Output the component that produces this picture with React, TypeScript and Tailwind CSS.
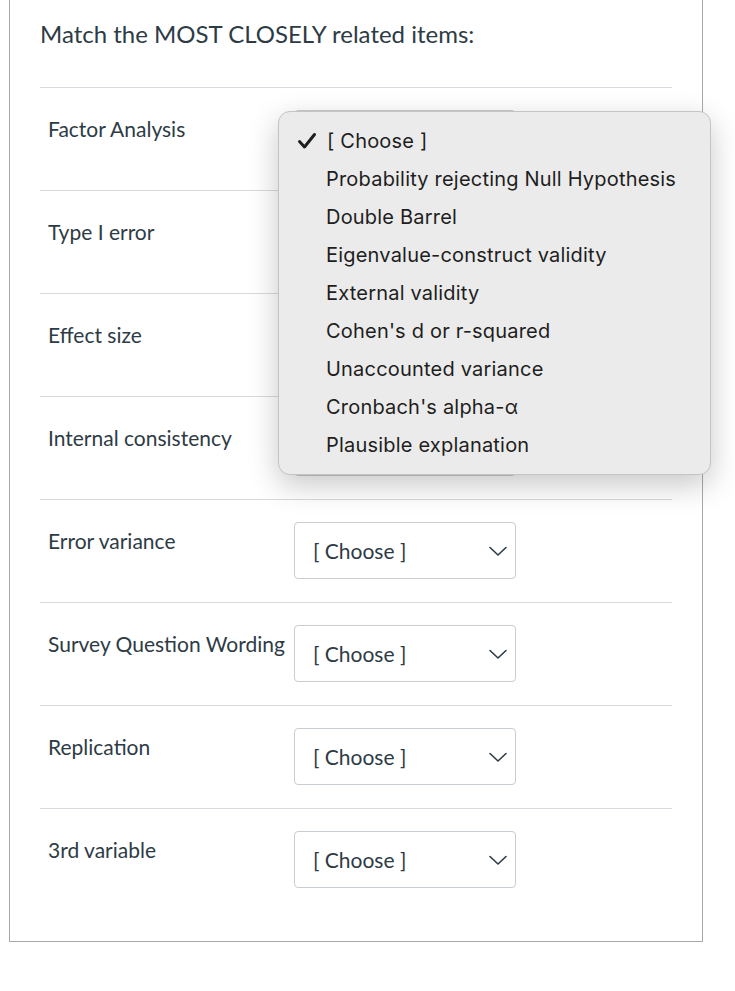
import React from "react";

const rows = [
  "Factor Analysis",
  "Type I error",
  "Effect size",
  "Internal consistency",
  "Error variance",
  "Survey Question Wording",
  "Replication",
  "3rd variable",
];

const options = [
  "Probability rejecting Null Hypothesis",
  "Double Barrel",
  "Eigenvalue-construct validity",
  "External validity",
  "Cohen's d or r-squared",
  "Unaccounted variance",
  "Cronbach's alpha-α",
  "Plausible explanation",
];

const Chevron = () => (
  <svg width="20" height="12" viewBox="0 0 20 12" fill="none" stroke="#2d3b45" strokeWidth="1.6" strokeLinecap="round" strokeLinejoin="round">
    <path d="M2 2.5 L10 10 L18 2.5" />
  </svg>
);

const App: React.FC = () => {
  return (
    <div className="relative min-h-screen bg-white" style={{ fontFamily: "Lato, 'Liberation Sans', sans-serif" }}>
      {/* -------- QUESTION PANEL -------- */}
      <div className="ml-[9px] w-[694px] h-[942px] border-x border-b border-[#a9a9a9] px-[30px] text-[#2d3b45]">
        <h2 className="pt-4 text-[24px] leading-[36px] font-normal">Match the MOST CLOSELY related items:</h2>
        <div className="mt-[35px]">
          {rows.map((label, i) => (
            <div key={label} className="flex h-[103px] border-t border-[#d7dade]">
              <div className="w-[254px] shrink-0 pl-2 pt-[26px] text-[21px] leading-[30px]">{label}</div>
              <div className="pt-[22px]">
                <div className="flex h-[57px] w-[222px] items-center justify-between rounded-[4px] border border-[#c7cdd1] bg-white pl-[18px] pr-[7px]">
                  {/* the first four are hidden under the open menu */}
                  <span className="text-[21px] text-[#2d3b45]">{i < 4 ? "" : "[ Choose ]"}</span>
                  <Chevron />
                </div>
              </div>
            </div>
          ))}
        </div>
      </div>

      {/* -------- OPEN SELECT MENU -------- */}
      <div
        className="absolute left-[278px] top-[111px] w-[433px] rounded-[12px] border border-[#c4c4c4] bg-[#ebebeb] py-[10px] shadow-[0_10px_30px_rgba(0,0,0,0.22)]"
        style={{ fontFamily: "Inter, 'Noto Sans', sans-serif" }}
      >
        <div className="flex h-[38px] items-center text-[20px] tracking-[0.2px] text-[#1e1e1e]">
          <span className="flex w-[48px] justify-end pr-[10px]">
            <svg width="20" height="18" viewBox="0 0 20 18" fill="none" stroke="#1e1e1e" strokeWidth="3" strokeLinecap="round" strokeLinejoin="round">
              <path d="M2.5 9.5 L7.5 15 L17.5 2.5" />
            </svg>
          </span>
          <span>[ Choose ]</span>
        </div>
        {options.map((o) => (
          <div key={o} className="flex h-[38px] items-center pl-[47px] text-[20px] tracking-[0.2px] text-[#1e1e1e]">
            {o}
          </div>
        ))}
      </div>
    </div>
  );
};

export default App;
